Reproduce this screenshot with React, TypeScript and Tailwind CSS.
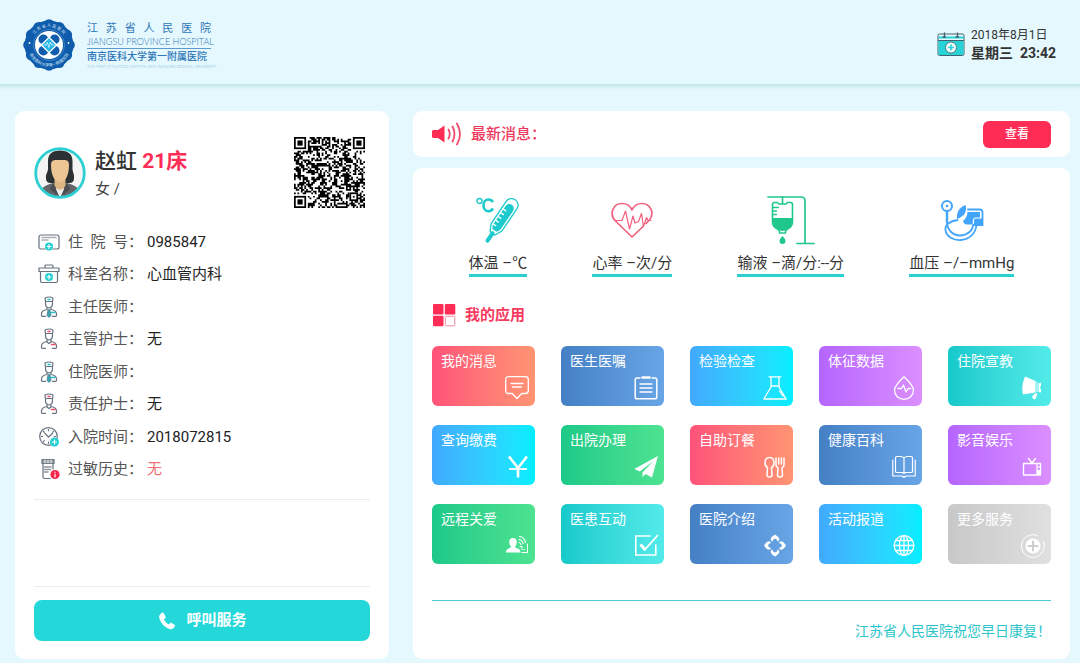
import type { ReactNode } from 'react'

const FONT = 'font-[Roboto,"Noto_Sans_CJK_SC",sans-serif]'

const GRADIENTS = {
    pink: 'bg-linear-to-r from-[#ff5279] to-[#ff9472]',
    blue: 'bg-linear-to-r from-[#4580c5] to-[#68a5e6]',
    cyan: 'bg-linear-to-r from-[#41a9ff] to-[#00efff]',
    purple: 'bg-linear-to-r from-[#b565ff] to-[#dc8fff]',
    teal: 'bg-linear-to-r from-[#15c9cb] to-[#52ebea]',
    green: 'bg-linear-to-r from-[#1bc988] to-[#4de391]',
    gray: 'bg-linear-to-r from-[#c8c8c8] to-[#e0e0e0]',
}

/* ---------- Logo ---------- */

function HospitalBadge() {
    const petals = Array.from({ length: 12 }, (_, i) => (i * Math.PI) / 6)
    return (
        <svg className="size-[52px] shrink-0" viewBox="0 0 52 52" aria-hidden="true">
            <g fill="#0f5cad">
                <circle cx="26" cy="26" r="24.4" />
                {petals.map((a) => (
                    <circle key={a} cx={26 + 20 * Math.cos(a)} cy={26 + 20 * Math.sin(a)} r="5.8" />
                ))}
            </g>
            <circle cx="26" cy="26" r="15.6" fill="none" stroke="#5d97d0" strokeWidth=".6" />
            <circle cx="26" cy="26" r="14" fill="#fff" />
            <g fill="#0f5cad">
                <circle cx="20.4" cy="20.4" r="4.9" />
                <circle cx="31.6" cy="20.4" r="4.9" />
                <circle cx="20.4" cy="31.6" r="4.9" />
                <circle cx="31.6" cy="31.6" r="4.9" />
            </g>
            <path d="M26 18.300 33.700 26 26 33.700 18.300 26Z" fill="#28b9ea" stroke="#fff" strokeWidth="1.3" />
            <path d="M20.500 26h2.500l1.300-2.500 1.600 5 1.600-5.500 1.200 3h2.800" fill="none" stroke="#d8f4fc" strokeWidth=".8" />
            <path id="badge-top" d="M8 26a18 18 0 0 1 36 0" fill="none" />
            <path id="badge-bottom" d="M4.500 26a21.500 21.500 0 0 0 43 0" fill="none" />
            <g fill="#d6e8f7" fontSize="4" textAnchor="middle">
                <text>
                    <textPath href="#badge-top" startOffset="50%">江 苏 省 人 民 医 院</textPath>
                </text>
                <text>
                    <textPath href="#badge-bottom" startOffset="50%">南京医科大学第一附属医院</textPath>
                </text>
            </g>
            <circle cx="6.5" cy="24" r=".9" fill="#fff" />
            <circle cx="45.5" cy="24" r=".9" fill="#fff" />
        </svg>
    )
}

function CalendarIcon() {
    return (
        <svg className="h-6 w-7" viewBox="0 0 28 24" fill="none" stroke="#43616f" strokeWidth="1" aria-hidden="true">
            <rect x="1" y="2" width="26" height="21.5" rx="1.5" fill="#e4f8fd" />
            <path d="M1.5 8.5h25V22a1 1 0 0 1-1 1h-23a1 1 0 0 1-1-1Z" fill="#27d3d6" stroke="none" />
            <path d="M1.5 5.5h25" stroke="#27d3d6" strokeWidth="2" />
            <path d="M1 8.5h26" />
            <path d="M7.5 .5v4M20.5 .5v4M5.5 5h3.5M18.5 5h3.5" strokeWidth="1.3" />
            <circle cx="14" cy="15.5" r="5.5" fill="#f2fcfd" strokeWidth=".8" />
            <path d="M14 12.5v6M11 15.5h6" stroke="#27d3d6" strokeWidth="1.6" />
        </svg>
    )
}

/* ---------- Patient card ---------- */

function Avatar() {
    return (
        <svg className="size-[52px] shrink-0" viewBox="0 0 52 52" role="img" aria-label="头像">
            <clipPath id="avatar-clip">
                <circle cx="26" cy="26" r="24" />
            </clipPath>
            <circle cx="26" cy="26" r="24" fill="#f4f4f4" />
            <g clipPath="url(#avatar-clip)">
                <path d="M14 14C14 7 18 3.500 26 3.500S38.500 7 38.500 14v8c0 3 2 5 1.500 9 0 4-2 5-5 5H17c-3 0-5-1-5-5-.5-4 2-6 2-9Z" fill="#2b3035" />
                <path d="M5 52c1-11 4-13 14-16h14c10 3 13 5 14 16Z" fill="#636568" />
                <path d="M20.500 31h11v7L26 48l-5.500-10Z" fill="#dcb582" />
                <path d="m22 41 4 2 4-2-1 11h-6Z" fill="#eeece8" />
                <path d="m19 36 7 15-10-9ZM33 36l-7 15 10-9Z" fill="#4a4c50" />
                <path d="M17 18c0-4 2-5 5-5h8c3 0 5 1 5 5 0 9-3 17-9 17s-9-8-9-17Z" fill="#ebc594" />
            </g>
            <circle cx="26" cy="26" r="24.3" fill="none" stroke="#2cd0d4" strokeWidth="2.8" />
        </svg>
    )
}

const QR_SIZE = 41

function isFinder(x: number, y: number) {
    const near = (v: number) => v < 8
    const far = (v: number) => v > QR_SIZE - 9
    return (near(x) && near(y)) || (far(x) && near(y)) || (near(x) && far(y))
}

function buildQrPath() {
    let seed = 985847
    let d = ''
    for (let y = 0; y < QR_SIZE; y++) {
        for (let x = 0; x < QR_SIZE; x++) {
            seed = (seed * 1103515245 + 12345) % 2147483648
            if (!isFinder(x, y) && seed / 2147483648 > 0.48) d += `M${x} ${y}h1v1h-1z`
        }
    }
    return d
}

const QR_PATH = buildQrPath()

function QrCode() {
    const corners = [[0, 0], [34, 0], [0, 34]]
    return (
        <svg className="size-[71px] shrink-0" viewBox="0 0 41 41" role="img" aria-label="二维码">
            <path d={QR_PATH} fill="#000" />
            {corners.map(([x, y]) => (
                <g key={`${x}-${y}`}>
                    <rect x={x + 0.5} y={y + 0.5} width="6" height="6" fill="none" stroke="#000" />
                    <rect x={x + 2} y={y + 2} width="3" height="3" />
                </g>
            ))}
            <rect x="32" y="32" width="5" height="5" fill="#fff" />
            <rect x="32.5" y="32.5" width="4" height="4" fill="none" stroke="#000" />
            <rect x="34" y="34" width="1" height="1" />
        </svg>
    )
}

function InfoIcon({ children }: { children: ReactNode }) {
    return (
        <svg
            className="size-[22px] shrink-0"
            viewBox="0 0 22 22"
            fill="none"
            stroke="#66727f"
            strokeWidth="1.2"
            strokeLinecap="round"
            strokeLinejoin="round"
            aria-hidden="true"
        >
            {children}
        </svg>
    )
}

function PlusDot({ x, y, r = 4 }: { x: number; y: number; r?: number }) {
    return (
        <>
            <circle cx={x} cy={y} r={r} fill="#23cfd3" stroke="none" />
            <path d={`M${x - 2} ${y}h4M${x} ${y - 2}v4`} stroke="#fff" />
        </>
    )
}

const CardIcon = () => (
    <InfoIcon>
        <path d="M7 18H3a2 2 0 0 1-2-2V6a2 2 0 0 1 2-2h16a2 2 0 0 1 2 2v10a2 2 0 0 1-2 2h-4" />
        <path d="M4 6.500h14M4 9h6" stroke="#aab1b8" strokeWidth="1.5" />
        <PlusDot x={11} y={15.5} />
    </InfoIcon>
)

const KitIcon = () => (
    <InfoIcon>
        <path d="M7 4.500V3a1 1 0 0 1 1-1h6a1 1 0 0 1 1 1v1.500M1 5h20v3.500H1ZM2.500 8.500V18a1.500 1.500 0 0 0 1.500 1.500h14a1.500 1.500 0 0 0 1.500-1.500V8.500" />
        <PlusDot x={11} y={14} />
    </InfoIcon>
)

function StaffIcon({ nurse = false }: { nurse?: boolean }) {
    const accent = nurse ? '#f2506b' : '#2fc3cf'
    return (
        <InfoIcon>
            <path d="M7.500 5.500 7 2q4-2 8 0l-.5 3.500ZM7.500 5.500v2q0 4 3.500 4.500 3.500-.5 3.500-4.500v-2" />
            <path d="M9 12v1.500q-5.500 1-5.500 4.500v1.500q0 .8 1 .8h3M13 12v1.500q5.500 1 5.500 4.500v1.500q0 .8-1 .8h-3" />
            <path d="M10 3.500h2M13.500 16.500h3.500" stroke={accent} strokeWidth="1.6" />
            {nurse ? (
                <path d="m9 14 2 1.500 2-1.500" />
            ) : (
                <path d="m10 14-1 5.500 2 2 2-2-1-5.500Z" fill="#3aa5b4" stroke="#4f7c8b" strokeWidth=".8" />
            )}
        </InfoIcon>
    )
}

const ClockIcon = () => (
    <InfoIcon>
        <circle cx="10.5" cy="10.5" r="8.8" />
        <path d="M10.500 3.500v1.200M3.500 10.500h1.200M16.200 10.500h1.300M10.500 16.200v1.300M5.500 5.500l.8.800M15.500 5.500l-.8.800M5.500 15.500l.8-.8M7 7.500l3.500 3.500 4-3.500" />
        <PlusDot x={16.5} y={16} r={4.5} />
    </InfoIcon>
)

const BottleIcon = () => (
    <InfoIcon>
        <path d="M4 1.500h12v4H4Z" fill="#9aa1a8" />
        <path d="M7 2v3M10 2v3M13 2v3" stroke="#fff" strokeWidth=".8" />
        <path d="M5 5.500V19a1.500 1.500 0 0 0 1.500 1.500H12M15 5.500V11" />
        <path d="M6.500 9h6.500M6.500 11.500h6M6.500 14H10" stroke="#8d949b" strokeWidth="1.6" />
        <circle cx="17" cy="16.5" r="4.6" fill="#f5274c" stroke="none" />
        <path d="M17 14v.2M17 16v3" stroke="#fff" />
    </InfoIcon>
)

const patientInfo = [
    { label: '住  院  号', value: '0985847', icon: <CardIcon /> },
    { label: '科室名称', value: '心血管内科', icon: <KitIcon /> },
    { label: '主任医师', value: '', icon: <StaffIcon /> },
    { label: '主管护士', value: '无', icon: <StaffIcon nurse /> },
    { label: '住院医师', value: '', icon: <StaffIcon /> },
    { label: '责任护士', value: '无', icon: <StaffIcon nurse /> },
    { label: '入院时间', value: '2018072815', icon: <ClockIcon /> },
    { label: '过敏历史', value: '无', icon: <BottleIcon />, warn: true },
]

function PatientCard() {
    return (
        <aside className="flex flex-col rounded-[9px] bg-white px-[19px] pt-[26px] pb-[18px]">
            <div className="flex items-start justify-between pr-[5px]">
                <div className="flex items-center gap-[9px] pt-[6px]">
                    <Avatar />
                    <div className="pt-1">
                        <h1 className="text-[21px] leading-7 font-medium text-[#333]">
                            赵虹 <span className="font-bold text-[#ff2d55]">21床</span>
                        </h1>
                        <p className="text-[15px] leading-7 text-[#444]">女 /</p>
                    </div>
                </div>
                <QrCode />
            </div>

            <dl className="mt-[22px] flex flex-1 flex-col justify-between text-[15px] leading-6">
                {patientInfo.map((row) => (
                    <div key={row.label} className="flex items-center pl-1">
                        {row.icon}
                        <dt className="ml-2 w-[79px] whitespace-pre text-[#555]">{row.label}：</dt>
                        <dd className={row.warn ? 'text-[#ee7078]' : 'text-[#222]'}>{row.value}</dd>
                    </div>
                ))}
            </dl>

            <div className="mt-[18px] h-[88px] border-y border-[#ececec]" />

            <button className="mt-[13px] flex h-[41px] items-center justify-center gap-[9px] rounded-lg bg-[#24d8da] text-[15px] font-bold text-white">
                <svg className="size-5" viewBox="0 0 20 20" fill="#fff" aria-hidden="true">
                    <path d="M5.200 1.800C3 3 1.400 5 2.600 8c1.700 4.600 4.700 7.900 9 9.800 2.800 1.100 5-.2 6.200-2.300.4-.8.200-1.300-.4-1.700l-2.700-1.700c-.6-.4-1.200-.3-1.700.2l-1.100 1.200c-2.400-1.100-4-2.900-5-5.200l1.300-1.100c.5-.5.600-1 .3-1.700L6.900 2.400c-.4-.7-1-1-1.700-.6Z" />
                </svg>
                呼叫服务
            </button>
        </aside>
    )
}

/* ---------- Vitals ---------- */

const ThermometerIcon = () => (
    <svg className="h-[50px] w-11" viewBox="0 0 44 50" fill="none" stroke="#1cc9cc" aria-hidden="true">
        <circle cx="3.5" cy="6" r="2.5" strokeWidth="1.4" />
        <path d="M17 7.200c-1.200-2-2.800-2.700-4.500-2.700C9.500 4.500 7.500 6.800 7.500 10.200s2 6 5 6c1.800 0 3.300-.8 4.500-2.700" strokeWidth="2.6" />
        <g transform="translate(25.5 25) rotate(34)">
            <path d="M-6.500-18a6.500 6.500 0 0 1 13 0V9L3 16h-6L-6.500 9Z" strokeWidth="1.3" />
            <path d="M-4.500-14a4.500 4.500 0 0 1 9 0V9L2.500 12.500h-5l-2-3.500Z" fill="#1cc9cc" stroke="none" />
            <path d="M-5-10h4M-5-5.500h4M-5-1h4M-5 3.500h4M-5 8h4" stroke="#fff" strokeWidth="1.3" />
            <path d="M0 16v9" strokeWidth="4" strokeLinecap="round" />
        </g>
    </svg>
)

const HeartIcon = () => (
    <svg className="h-[50px] w-11" viewBox="0 0 44 50" fill="none" stroke="#f2617f" strokeLinejoin="round" strokeLinecap="round" aria-hidden="true">
        <path d="M33 31.500 22 42 5.500 26C-1.500 18.500 3.500 8.500 12 8.500c5 0 8.500 3 10 6.500 1.500-3.500 5-6.500 10-6.500C40 8.500 45.500 18 39 25.500l-3 3" strokeWidth="1.7" />
        <path d="M6 25.500h6l3.500-9.500 4 18 3.500-13 2 7 3.500-1.500 3-8 2 13 3-9 1.500 3h3" strokeWidth="1.2" />
    </svg>
)

const InfusionIcon = () => (
    <svg className="h-[50px] w-12" viewBox="0 0 48 50" fill="none" stroke="#1fc88a" strokeLinecap="round" strokeLinejoin="round" aria-hidden="true">
        <path d="M1 2h33q4 0 4 4v42M30 48.500h17" strokeWidth="1.7" />
        <path d="M15.500 2v6M5.500 9.500q0-2 2-2h3l1.500 1.500h7L20.500 7.500h3q2 0 2 2V27q0 4-4 6.500l-3 2.500v2h-6v-2l-3-2.500q-4-2.500-4-6.500Z" strokeWidth="1.6" />
        <path d="M6 23h19v4.500q0 3.500-4 6-3 2.500-5.500 2.500T10 33.500q-4-2.500-4-6Z" fill="#1fc88a" stroke="none" />
        <path d="M6 12.500h5.500M6 16h3.500M6 19.500h3.500" strokeWidth="1.3" />
        <path d="M15.500 41q3 3 3 5a3 3 0 0 1-6 0q0-2 3-5Z" fill="#1fc88a" stroke="none" />
    </svg>
)

const PressureIcon = () => (
    <svg className="h-[50px] w-11" viewBox="0 0 44 50" fill="none" stroke="#42a5fb" strokeLinecap="round" aria-hidden="true">
        <circle cx="7" cy="11" r="5" strokeWidth="2" />
        <circle cx="7" cy="11" r="1.3" fill="#42a5fb" stroke="none" />
        <path d="M7 16.500V27" strokeWidth="2.4" />
        <path d="M17.500 25C10 26 4.500 30 5.500 35.500c1 6 8 10 15.500 9.500 8-.5 14.500-6 15.500-15" strokeWidth="1.8" />
        <path d="M7 27c0 8 6 13.500 13 13.500S32.500 36 33 30.500" strokeWidth="1.8" />
        <path d="M17 24c-.5-7 2-11.500 8.500-14 1.500 5.500 0 11-8.500 14Z" fill="#42a5fb" stroke="none" />
        <path d="M28 14.500h11.500q3 0 3 3V30h-9" strokeWidth="1.8" />
        <path d="M27.500 17q-.5 6-4.500 9 1 3.500 4 3.500h6q-1-6 2-7h5V17Z" fill="#42a5fb" stroke="none" />
        <path d="M34 25q0-1.500 1.500-1.500H42v7h-8Z" fill="#42a5fb" stroke="none" />
    </svg>
)

const vitals = [
    { text: '体温 –℃', icon: <ThermometerIcon /> },
    { text: '心率 –次/分', icon: <HeartIcon /> },
    { text: '输液 –滴/分:--分', icon: <InfusionIcon /> },
    { text: '血压 –/–mmHg', icon: <PressureIcon /> },
]

/* ---------- App tiles ---------- */

function TileIcon({ children }: { children: ReactNode }) {
    return (
        <svg
            className="size-6 self-end"
            viewBox="0 0 24 24"
            fill="none"
            stroke="#fff"
            strokeWidth="1.3"
            strokeLinecap="round"
            strokeLinejoin="round"
            aria-hidden="true"
        >
            {children}
        </svg>
    )
}

const apps: { name: string; color: keyof typeof GRADIENTS; icon: ReactNode }[] = [
    {
        name: '我的消息',
        color: 'pink',
        icon: <path d="M3.500.700h17q2.800 0 2.800 2.800v11q0 3-2.800 3h-3.700L12 22.500l-4.800-5H3.500q-2.800 0-2.800-3v-11Q.700.700 3.500.700ZM6 7.500h12M7.500 11h9" />,
    },
    {
        name: '医生医嘱',
        color: 'blue',
        icon: (
            <>
                <path d="M6 2H3Q1.200 2 1.200 4v17q0 1.800 1.800 1.800h18q1.800 0 1.800-1.800V4q0-2-1.800-2h-3" strokeWidth="1.5" />
                <path d="M8.500 1.500h7" strokeWidth="2.5" />
                <path d="M6 8h12M6 12h12M6 16h12" />
            </>
        ),
    },
    {
        name: '检验检查',
        color: 'cyan',
        icon: <path d="M6 .8h12M8 1v10L.900 23h22.200L16 11V1M8 10h8M16.500 15l3.500 5" />,
    },
    {
        name: '体征数据',
        color: 'purple',
        icon: <path d="M12 .8q9.500 9 9.500 13.500a9.500 9 0 0 1-19 0Q2.500 9.800 12 .8ZM6 12.500h3.500l2-3.500 2.500 7 2-3.500h2.500" />,
    },
    {
        name: '住院宣教',
        color: 'teal',
        icon: (
            <g fill="#fff" stroke="none">
                <path d="M4 .500 14.500 5v11.500L2 18.500Q.500 13 1.800 7ZM15.500 6v10l1 .3V6ZM17.500 7.500l2.500-1v3l-1 2 1 2v3l-2.500-.5Z" />
                <path d="M16 17v2q-.5 3-2.500 4.500-3-1.500-2-3.500 1-2.500 4.500-3Z" />
            </g>
        ),
    },
    {
        name: '查询缴费',
        color: 'cyan',
        icon: (
            <>
                <path d="M4 1.500 13 13l9-11.500M13 12.500v10" strokeWidth="2.6" strokeLinecap="butt" />
                <path d="M4 14h18" strokeWidth="1.8" strokeLinecap="butt" />
            </>
        ),
    },
    {
        name: '出院办理',
        color: 'green',
        icon: <path d="M24 1 .300 14l5.500 2.500L19.500 6 8.500 17.500V22l3-3 6.500 3.500Z" fill="#fff" stroke="none" />,
    },
    {
        name: '自助订餐',
        color: 'pink',
        icon: (
            <path d="M6.500 2.500C3.500 2.500 2 5 2 8q0 3.500 2.500 4.500L4 20q0 2 2.500 2T9 20l-.5-7.500Q11 11.500 11 8c0-3-1.500-5.500-4.500-5.500ZM13 3v7q0 2 2 2.800L14.500 20q0 2 2.500 2t2.500-2L19 12.800q2-.8 2-2.800V3M15.700 3v6M18.400 3v6" strokeWidth="1.5" />
        ),
    },
    {
        name: '健康百科',
        color: 'blue',
        icon: <path d="M12 3Q10.500 1.500 9 1.500H5Q3.500 1.500 3.500 3v13.500q0 1 1.500 1h4q2 0 3 1 1-1 3-1h4q1.500 0 1.500-1V3q0-1.500-1.500-1.500h-4Q13.500 1.500 12 3v15.500M.800 5v16H10q2 2 4 0h9.200V5" strokeWidth="1.2" />,
    },
    {
        name: '影音娱乐',
        color: 'purple',
        icon: (
            <>
                <path d="M2.500 8.500h17v11.500h-17ZM7.500 3.500l3.500 4.500 3.500-4.500" strokeWidth="1.4" />
                <path d="M16 8.500v11.500M16 12h3.500M16 15.500h3.500" strokeWidth="1.2" />
                <path d="M16 15.500h3.500v4.500H16Z" fill="#fff" stroke="none" />
            </>
        ),
    },
    {
        name: '远程关爱',
        color: 'green',
        icon: (
            <>
                <path d="M8 4q3.800 0 3.800 4.200 0 3-1.800 4.300.3 1.500 4 2.500 1.500.6 1.500 3.500H1q0-2.900 1.500-3.500 3.400-1 3.700-2.500-2-1.300-2-4.300Q4.200 4 8 4Z" fill="#fff" stroke="none" />
                <path d="M14.500 2.500q5 .5 6 6M14 5.500q3.500.5 4 4M14 8.500q1.500.5 2 2" strokeWidth="1.2" />
                <path d="M17 18.500h5.500V10M15 12.500h2v3M19 15.500h.5" strokeWidth="1" />
            </>
        ),
    },
    {
        name: '医患互动',
        color: 'teal',
        icon: (
            <>
                <path d="M16 2H1.800v19h20v-10" strokeWidth="1.6" strokeLinejoin="miter" />
                <path d="m6.500 10.500 5 5.500" strokeWidth="3" strokeLinecap="butt" />
                <path d="M10.500 16 23.500 1.500" strokeWidth="1.8" />
            </>
        ),
    },
    {
        name: '医院介绍',
        color: 'blue',
        icon: (
            <g fill="#fff" stroke="none">
                {[0, 90, 180, 270].map((deg) => (
                    <path key={deg} transform={`translate(12 11.5) rotate(${deg})`} d="M0-11C1.500-10 4.300-8.200 4.300-6.200 4.300-4.800 3.500-4.200 2.300-4.200 2.300-5.800 1.300-6.800 0-6.800S-2.300-5.800-2.300-4.200C-3.500-4.200-4.300-4.800-4.300-6.200-4.300-8.200-1.500-10 0-11Z" />
                ))}
            </g>
        ),
    },
    {
        name: '活动报道',
        color: 'cyan',
        icon: (
            <>
                <circle cx="12" cy="11.5" r="9.8" />
                <ellipse cx="12" cy="11.5" rx="4.5" ry="9.8" />
                <path d="M12 1.700v19.600M2.200 11.500h19.600M3.700 6.500h16.600M3.700 16.500h16.600" />
            </>
        ),
    },
    {
        name: '更多服务',
        color: 'gray',
        icon: (
            <>
                <path d="M17 1.800a11.400 11.400 0 1 0 5.500 6" strokeWidth="1" />
                <circle cx="12" cy="12" r="7.5" fill="#fff" stroke="none" />
                <path d="M12 7.500v9M7.500 12h9" stroke="#cfcfcf" strokeWidth="2" />
            </>
        ),
    },
]

export default function App() {
    return (
        <div className={`${FONT} flex min-h-screen flex-col bg-[#e4f8fd]`}>
            {/* Header */}
            <header className="flex h-[86px] items-center justify-between border-b-2 border-[#c5e8eb] pr-6 pl-[23px] shadow-[0_1px_3px_#c5e8eb]">
                <div className="flex items-center gap-3 pt-[5px]">
                    <HospitalBadge />
                    <div className="w-[124px] pt-[2px] text-[#2f77b8]">
                        <div className="flex justify-between text-[11px] leading-[13px]">
                            {[...'江苏省人民医院'].map((char) => (
                                <span key={char}>{char}</span>
                            ))}
                        </div>
                        <div className="border-b border-[#5b9aca] font-[Lato,sans-serif] text-[9px] leading-[13px] font-light whitespace-nowrap">JIANGSU PROVINCE HOSPITAL</div>
                        <div className="text-[10px] leading-4 font-medium whitespace-nowrap">南京医科大学第一附属医院</div>
                        <div className="font-[Roboto,sans-serif] text-[4px] leading-[4px] font-light whitespace-nowrap text-[#8bb9da]">
                            THE FIRST AFFILIATED HOSPITAL WITH NANJING MEDICAL UNIVERSITY
                        </div>
                    </div>
                </div>
                <div className="flex items-center gap-[6px] pt-[4px] text-[#333]">
                    <CalendarIcon />
                    <div>
                        <div className="text-xs leading-[17px]">2018年8月1日</div>
                        <div className="text-sm leading-[18px] font-bold whitespace-pre">星期三  23:42</div>
                    </div>
                </div>
            </header>

            <div className="grid flex-1 grid-cols-[374fr_657fr] gap-6 pt-[25px] pr-[10px] pb-1 pl-[15px]">
                <PatientCard />

                <main className="flex flex-col gap-[11px]">
                    {/* News bar */}
                    <section className="flex h-[46px] items-center justify-between rounded-[9px] bg-white px-[19px]">
                        <div className="flex items-center gap-[9px] text-[15px] font-medium text-[#ee3a5e]">
                            <svg className="h-6 w-[30px]" viewBox="0 0 30 24" fill="none" stroke="#f2486a" strokeWidth="1.8" strokeLinecap="round" aria-hidden="true">
                                <path d="M1.500 8H6l6.500-4.500v17L6 16H1.500Q0 16 0 14.500v-5Q0 8 1.500 8Z" fill="#ff2d55" stroke="none" />
                                <path d="M16.500 7.500q2.500 4.500 0 9M20.500 4.500q4 7.500 0 15M25 1.500q6 10.500 0 21" />
                            </svg>
                            最新消息：
                        </div>
                        <button className="h-[27px] w-[68px] rounded-md bg-[#ff2d55] text-xs font-medium text-white">查看</button>
                    </section>

                    <section className="flex flex-1 flex-col rounded-[9px] bg-white px-[19px]">
                        {/* Vitals */}
                        <ul className="flex justify-around px-1 pt-[27px] text-[15px] leading-5 text-[#333]">
                            {vitals.map((v) => (
                                <li key={v.text} className="flex flex-col items-center gap-2">
                                    {v.icon}
                                    <span className="border-b-3 border-[#2bd0d3] pb-px">{v.text}</span>
                                </li>
                            ))}
                        </ul>

                        {/* Apps */}
                        <h2 className="mt-[26px] flex items-center gap-[9px] text-[15px] leading-6 font-bold text-[#f73a5f]">
                            <svg className="size-6" viewBox="0 0 24 24" fill="#ff2d55" aria-hidden="true">
                                <rect x="1" y="1" width="10.5" height="10.5" rx="1" />
                                <rect x="12.8" y="1" width="10.5" height="10.5" rx="1" />
                                <rect x="1" y="12.8" width="10.5" height="10.5" rx="1" />
                                <rect x="13.3" y="13.3" width="9.5" height="9.5" rx="1" fill="none" stroke="#f48ca0" />
                            </svg>
                            我的应用
                        </h2>
                        <nav className="mt-[19px] grid grid-cols-5 gap-x-[26px] gap-y-[19px]">
                            {apps.map((app) => (
                                <button
                                    key={app.name}
                                    className={`flex h-[60px] flex-col justify-between rounded-md pt-[6px] pr-[6px] pb-[6px] pl-[9px] text-left text-sm leading-[18px] text-white ${GRADIENTS[app.color]}`}
                                >
                                    {app.name}
                                    <TileIcon>{app.icon}</TileIcon>
                                </button>
                            ))}
                        </nav>

                        <p className="mt-[36px] border-t border-[#45cfd0] pt-[20px] pb-[18px] text-right text-sm leading-5 text-[#2cc5c9]">
                            江苏省人民医院祝您早日康复！
                        </p>
                    </section>
                </main>
            </div>
        </div>
    )
}
